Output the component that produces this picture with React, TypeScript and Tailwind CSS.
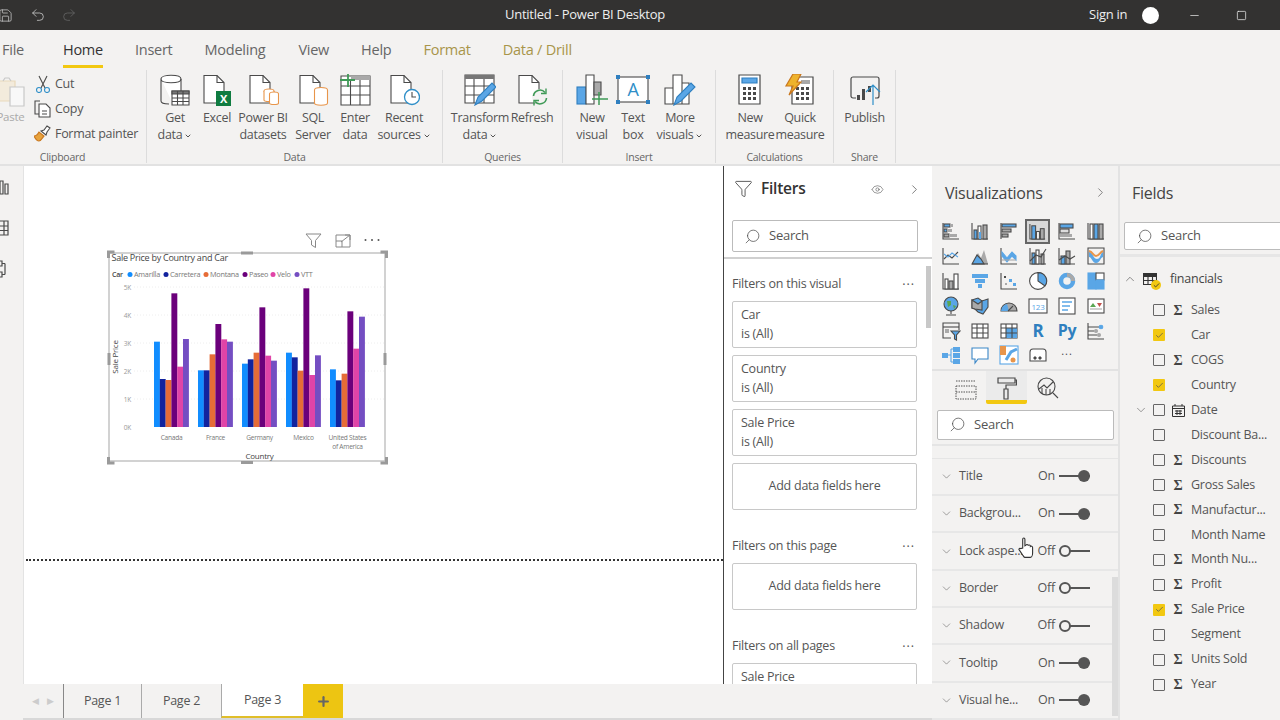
import type { ReactNode } from 'react'
import { ChevronRight, ChevronDown, ChevronUp, Search, Filter, Eye, Undo2, Redo2, Save, Minus, Square, Plus, Check } from 'lucide-react'

const B = '#5aa6e6'
const D = '#4a4a4a'
const G = '#a9a9a9'
const O = '#e8954a'

function Ico({ s = 20, vb = 20, children }: { s?: number; vb?: number; children: ReactNode }) {
  return (
    <svg width={s} height={s} viewBox={`0 0 ${vb} ${vb}`} fill="none" stroke={D} strokeWidth="1.1">
      {children}
    </svg>
  )
}

const R = ({ x, y, w, h, f = B, st = 'none' }: { x: number; y: number; w: number; h: number; f?: string; st?: string }) => (
  <rect x={x} y={y} width={w} height={h} fill={f} stroke={st} />
)
const Ax = () => <path d="M2 2v16h16" />

const vizIcons: ReactNode[] = [
  <><Ax /><R x={3} y={3} w={6} h={3} st={D} /><R x={9} y={3} w={3} h={3} f={G} /><R x={3} y={8} w={3} h={3} st={D} /><R x={6} y={8} w={5} h={3} f={G} /><R x={3} y={13} w={5} h={3} f={G} st={D} /><R x={8} y={13} w={8} h={3} f={G} /></>,
  <><Ax /><R x={4} y={9} w={3} h={9} st={D} /><R x={8} y={5} w={3} h={13} f="#fff" st={D} /><R x={9} y={11} w={2} h={7} /><R x={13} y={4} w={4} h={14} f={G} st={D} /></>,
  <><path d="M2 2v16" /><R x={3} y={3} w={14} h={3} st={D} /><R x={3} y={8} w={9} h={3} f={G} st={D} /><R x={3} y={13} w={6} h={3} f={G} st={D} /></>,
  <><Ax /><R x={4} y={4} w={4} h={14} st={D} /><R x={9} y={10} w={3} h={8} f="#fff" st={D} /><R x={13} y={7} w={4} h={11} f={G} st={D} /></>,
  <><Ax /><R x={3} y={3} w={13} h={4} st={D} /><R x={3} y={8} w={9} h={4} f="#ddd" st={D} /><R x={3} y={13} w={12} h={3} f={G} /></>,
  <><Ax /><R x={4} y={3} w={3} h={15} f="#fff" st={D} /><R x={8} y={3} w={4} h={15} st={D} /><R x={13} y={3} w={4} h={15} f={G} st={D} /></>,
  <><Ax /><path d="M3 13l4-4 4 3 6-6" stroke={D} /><path d="M3 8l4 3 4-4 6 4" stroke={B} /></>,
  <><path d="M2 18L8 7l3 5 3-8 4 14z" fill={G} stroke="none" /><path d="M2 18L7 9l4 4 3 5z" fill={B} /><path d="M2 18h16" /></>,
  <><Ax /><path d="M3 6l5 6 5-6 4 4v4l-4-4-5 6-5-6z" fill={B} stroke={B} /><path d="M3 14h14" stroke={G} /></>,
  <><Ax /><R x={4} y={7} w={3} h={11} st={D} /><R x={8} y={4} w={3} h={14} f="#fff" st={D} /><R x={13} y={8} w={3} h={10} f={G} st={D} /><path d="M2 15l6-6 5 2 5-8" stroke={D} /></>,
  <><Ax /><R x={4} y={10} w={4} h={8} st={D} /><R x={9} y={5} w={4} h={13} f={G} st={D} /><path d="M2 14l6-4 5 3 5-3" /></>,
  <><path d="M2 2h16v16H2z" /><path d="M3 6c4 0 4 7 8 7s3-6 6-7v5c-3 1-3 6-7 6s-4-6-7-6z" fill={B} stroke="none" /><path d="M3 5c4 1 4 5 7 5s4-4 7-5" stroke={O} strokeWidth="2" /></>,
  <><Ax /><R x={4} y={8} w={3} h={10} f="#fff" st={D} /><R x={8} y={10} w={4} h={8} f={G} st={D} /><R x={13} y={3} w={4} h={15} f="#fff" st={D} /></>,
  <><path d="M2 3h16v4H2z" fill={B} stroke="none" /><path d="M5 8h10v4H5z" fill={B} stroke="none" /><path d="M8 13h4v4H8z" fill={B} stroke="none" /></>,
  <><Ax /><R x={5} y={5} w={2} h={2} f={D} /><R x={10} y={8} w={3} h={3} /><R x={14} y={12} w={3} h={3} f={B} /><R x={6} y={12} w={2} h={2} f={G} /></>,
  <><circle cx="10" cy="10" r="8.4" fill="#fff" /><path d="M10 10V1.6A8.4 8.4 0 0 1 17 15z" fill={B} stroke={D} /></>,
  <><circle cx="10" cy="10" r="6" stroke={B} strokeWidth="4.5" /><path d="M10 2a8 8 0 0 1 8 8h-4a4 4 0 0 0-4-4z" fill={G} stroke="none" /></>,
  <><R x={2} y={2} w={8} h={16} st={B} /><R x={10} y={2} w={8} h={7} f="#fff" st={D} /><R x={10} y={9} w={8} h={9} st={B} /></>,
  <><circle cx="10" cy="8" r="7" fill={B} stroke={D} /><path d="M6 5h4v4l-3 2zM12 9l3 1-2 3z" fill="#5aa653" stroke="none" /><path d="M10 15v3M5 19h10" /></>,
  <><path d="M2 4l6-2 4 3 6-2v8l-5 7-5-2-3-3-3-1z" fill={B} stroke={D} /><path d="M2 4l6 4 4-3v9l-7-1-3-1z" fill={G} stroke={D} /></>,
  <><path d="M2 15a8 8 0 0 1 16 0z" fill={G} stroke={D} /><path d="M2 15a8 8 0 0 1 6-7l2 7z" fill={B} stroke="none" /><path d="M9 15l5-5" stroke={D} /></>,
  <><R x={1} y={3} w={18} h={14} f="#fff" st={D} /><text x="10" y="13.5" textAnchor="middle" fontSize="8" fill={B} stroke="none">123</text></>,
  <><R x={2} y={2} w={16} h={16} f="#fff" st={D} /><path d="M5 6h10M5 10h8M5 14h6" stroke={B} strokeWidth="1.5" /></>,
  <><R x={2} y={3} w={16} h={14} f="#fff" st={D} /><path d="M4 11l3-4 3 4z" fill="#5aa653" stroke="none" /><path d="M11 7h5l-2.500 4z" fill="#c4514d" stroke="none" /><path d="M4 13h12" stroke={G} /></>,
  <><path d="M10 17H2V2h16v7" /><path d="M2 6h16" /><R x={4} y={8} w={4} h={4} f={G} /><path d="M10 10h9l-3.500 4v5l-2-1v-4z" fill={B} stroke={D} /></>,
  <><R x={2} y={3} w={16} h={14} f="#fff" st={D} /><path d="M2 7h16M2 12h16M7 3v14M13 3v14" /></>,
  <><R x={2} y={3} w={16} h={14} f="#fff" st={D} /><R x={7} y={7} w={11} h={10} st="none" /><path d="M2 7h16M2 12h16M7 3v14M13 3v14" /></>,
  <text x="10" y="16" textAnchor="middle" fontSize="17" fontWeight="700" fill="#2f7fbf" stroke="none" fontFamily="Open Sans">R</text>,
  <text x="10" y="15" textAnchor="middle" fontSize="16" fontWeight="700" fill="#2f7fbf" stroke="none" fontFamily="Open Sans">Py</text>,
  <><path d="M2 2v16h16" /><path d="M2 6h11M2 10h6M2 14h9" /><circle cx="15" cy="6" r="1.800" fill={B} stroke={B} /><circle cx="10" cy="10" r="1.500" fill={G} stroke={G} /><circle cx="13" cy="14" r="1.500" fill={G} stroke={G} /></>,
  <><R x={1} y={8} w={6} h={5} st="none" /><R x={12} y={2} w={7} h={5} st="none" /><R x={12} y={8} w={7} h={5} st="none" /><R x={12} y={14} w={7} h={5} st="none" /><path d="M7 10h3M10 4v13M10 4h2M10 17h2" stroke={B} /></>,
  <><path d="M2 3h16v11H8l-3 4v-4H2z" fill="#fff" stroke="#3b87c7" /></>,
  <><R x={1} y={1} w={18} h={18} f="#fff" st={B} /><R x={1} y={1} w={6} h={9} f={O} /><path d="M7 15l5-8 6-3" stroke={B} strokeWidth="3" /><circle cx="14" cy="15" r="2.500" fill={O} stroke="none" /></>,
  <><path d="M2 7a3 3 0 0 1 3-3h10a3 3 0 0 1 3 3v9H2z" fill="#fff" /><path d="M5 13l2-2 2 2-2 2zM10 13l2-2 2 2-2 2z" fill={D} stroke="none" /></>,
  <text x="10" y="10" textAnchor="middle" fontSize="11" fill={D} stroke="none" letterSpacing="1">...</text>,
]

const PageIcon = ({ children }: { children?: ReactNode }) => (
  <svg width="32" height="32" viewBox="0 0 32 32" fill="none" stroke={D} strokeWidth="1.1">
    <path d="M3 1.500h13l7 7V29H3z" fill="#fff" />
    <path d="M16 1.500v7h7" />
    {children}
  </svg>
)

const ribbonIcons: Record<string, ReactNode> = {
  get: (
    <svg width="32" height="32" viewBox="0 0 32 32" fill="none" stroke={D} strokeWidth="1.1">
      <path d="M2 5c0-5 20-5 20 0v22c0 2-4 3-8 3" fill="#fff" />
      <path d="M2 5c0 5 20 5 20 0M2 5v22c0 2 4 3 8 3" />
      <path d="M13 17h17v14H13z" fill="#fff" />
      <path d="M13 17h17v3H13z" fill="#777" />
      <path d="M13 24h17M13 27.500h17M18.500 17v14M24 17v14" />
    </svg>
  ),
  excel: (
    <PageIcon>
      <rect x="15" y="17" width="15" height="15" fill="#107c41" stroke="none" />
      <text x="22.500" y="29" textAnchor="middle" fontSize="11" fontWeight="700" fill="#fff" stroke="none" fontFamily="Open Sans">X</text>
    </PageIcon>
  ),
  pbi: (
    <PageIcon>
      <ellipse cx="22" cy="17" rx="5" ry="2" fill="#fff" stroke={O} />
      <path d="M17 17v9c0 2 10 2 10 0v-9" fill="#fff" stroke={O} />
      <ellipse cx="27" cy="20" rx="4.500" ry="2" fill="#fff" stroke={O} />
      <path d="M22.500 20v9c0 2 9 2 9 0v-9" fill="#fff" stroke={O} />
    </PageIcon>
  ),
  sql: (
    <PageIcon>
      <ellipse cx="24" cy="16" rx="6.500" ry="2.500" fill="#fff" stroke={O} />
      <path d="M17.500 16v13c0 3 13 3 13 0V16" fill="#fff" stroke={O} />
    </PageIcon>
  ),
  enter: (
    <svg width="32" height="32" viewBox="0 0 32 32" fill="none" stroke={D} strokeWidth="1.1">
      <path d="M2 2h29v29H2z" fill="#fff" />
      <path d="M12 2h19v4H12z" fill={G} stroke="none" />
      <path d="M2 12h29M2 21h29M11.500 6v25M21 6v25" />
      <path d="M9 0v13M1 6h15" stroke="#3f9a57" strokeWidth="1.800" />
    </svg>
  ),
  recent: (
    <PageIcon>
      <circle cx="24" cy="23" r="7.500" fill="#fff" stroke="#2f8fc8" strokeWidth="1.300" />
      <path d="M24 18v5h4" stroke={D} />
    </PageIcon>
  ),
  transform: (
    <svg width="32" height="32" viewBox="0 0 32 32" fill="none" stroke={D} strokeWidth="1.1">
      <path d="M1 1h29v28H1z" fill="#fff" />
      <path d="M1 1h29v4H1z" fill="#777" stroke="none" />
      <path d="M1 12h29M1 21h29M10 5v24M20 5v24" />
      <path d="M11 31l3-8 14-14 4 4-14 14z" fill={B} stroke="#2f7fbf" />
    </svg>
  ),
  refresh: (
    <PageIcon>
      <circle cx="24" cy="23" r="8" fill="#f3f2f1" stroke="none" />
      <path d="M17.500 22a6.500 6.500 0 0 1 11.500-3.500M30.500 24a6.500 6.500 0 0 1-11.500 3.500" stroke="#3f9a57" strokeWidth="1.600" />
      <path d="M30 14.500v5h-5M18 31.500v-5h5" stroke="#3f9a57" strokeWidth="1.400" />
    </PageIcon>
  ),
  newVisual: (
    <svg width="32" height="32" viewBox="0 0 32 32" fill="none" stroke={D} strokeWidth="1.1">
      <rect x="1" y="13" width="9" height="17" fill={B} stroke="#2f7fbf" />
      <path d="M10 30V1h8v29z" fill="#fff" />
      <path d="M18 8h7v13h-7z" fill={G} />
      <path d="M23 18v13M16 25h16" stroke="#3f9a57" strokeWidth="1.500" />
    </svg>
  ),
  textBox: (
    <svg width="34" height="32" viewBox="0 0 34 32" fill="none" stroke={D} strokeWidth="1.1">
      <rect x="2" y="3" width="30" height="25" fill="#fff" />
      <text x="17" y="22" textAnchor="middle" fontSize="18" fill="#2f8fc8" stroke="none" fontFamily="Open Sans">A</text>
      <path d="M0 1h4v4H0zM30 1h4v4h-4zM0 26h4v4H0zM30 26h4v4h-4z" fill="#2f7fbf" stroke="none" />
    </svg>
  ),
  moreVisuals: (
    <svg width="32" height="32" viewBox="0 0 32 32" fill="none" stroke={D} strokeWidth="1.1">
      <path d="M1 30V14h8v16zM9 30V1h9v29zM18 30V9h7v21z" fill="#fff" />
      <path d="M10 31l3-8 14-14 4 4-14 14z" fill={B} stroke="#2f7fbf" />
    </svg>
  ),
  measure: (
    <svg width="32" height="32" viewBox="0 0 32 32" fill="none" stroke={D} strokeWidth="1.2">
      <path d="M5 1h21v29H5z" fill="#fff" />
      <path d="M8 4h15v5H8z" fill={B} stroke="#2f7fbf" />
      <path d="M9 13h3v3H9zM14 13h3v3h-3zM19 13h3v3h-3zM9 18h3v3H9zM14 18h3v3h-3zM19 18h3v3h-3zM9 23h3v3H9zM14 23h3v3h-3zM19 23h3v3h-3z" fill={D} stroke="none" />
    </svg>
  ),
  quick: (
    <svg width="32" height="32" viewBox="0 0 32 32" fill="none" stroke={D} strokeWidth="1.2">
      <path d="M8 3h21v27H8z" fill="#fff" />
      <path d="M17 6h9v4h-9z" fill={G} stroke="none" />
      <path d="M12 13h3v3h-3zM17 13h3v3h-3zM22 13h3v3h-3zM12 18h3v3h-3zM17 18h3v3h-3zM22 18h3v3h-3zM12 23h3v3h-3zM17 23h3v3h-3zM22 23h3v3h-3z" fill={D} stroke="none" />
      <path d="M9 0h8l-4 8h4L5 21l4-9H2z" fill="#eeb32d" stroke="#c9771e" />
    </svg>
  ),
  publish: (
    <svg width="32" height="32" viewBox="0 0 32 32" fill="none" stroke={D} strokeWidth="1.2">
      <path d="M7 24H4a2 2 0 0 1-2-2V5a2 2 0 0 1 2-2h24a2 2 0 0 1 2 2v17a2 2 0 0 1-2 2h-2" />
      <path d="M8 21h3v5H8zM13 15h3v11h-3zM19 12h3v6h-3z" fill={D} stroke="none" />
      <path d="M24 31V11M17 18l7-7 7 7" stroke="#2f8fc8" />
    </svg>
  ),
}

function RibbonBtn({ w, icon, lines, caret }: { w: number; icon: string; lines: string[]; caret?: boolean }) {
  return (
    <div className="flex flex-col items-center pt-[3px] text-[12.500px] tracking-[-0.3px] leading-[17px] text-[#555]" style={{ width: w }}>
      <div className="h-[34px] mb-[2px] flex items-center">{ribbonIcons[icon]}</div>
      {lines.map((l, i) => (
        <div key={l} className="whitespace-nowrap flex items-center">
          {l}
          {caret && i === lines.length - 1 && <ChevronDown size={8} strokeWidth={3} className="ml-[2px] mt-[2px]" />}
        </div>
      ))}
    </div>
  )
}

function Group({ w, label, pl = 0, children }: { w: number; label: string; pl?: number; children: ReactNode }) {
  return (
    <div className="h-full flex flex-col border-r border-[#dcdcdc] shrink-0" style={{ width: w }}>
      <div className="flex flex-1 min-h-0" style={{ paddingLeft: pl }}>{children}</div>
      <div className="h-[13px] text-center text-[10.500px] leading-[14px] text-[#666]">{label}</div>
    </div>
  )
}

function ClipRow({ icon, children }: { icon: ReactNode; children: ReactNode }) {
  return (
    <div className="flex items-center">
      <div className="w-[21px] shrink-0 flex">{icon}</div>
      {children}
    </div>
  )
}

function ClipboardGroup() {
  return (
    <div className="h-full w-[147px] shrink-0 flex flex-col border-r border-[#dcdcdc] overflow-hidden">
      <div className="flex flex-1 min-h-0">
        <div className="w-[31px] -ml-[5px] pt-[6px] flex flex-col items-center text-[11.500px] text-[#aaa] shrink-0">
          <svg width="30" height="31" viewBox="0 0 30 31" fill="none" stroke="#c8c8c8" strokeWidth="1.2">
            <path d="M3 5h16v20H3z" stroke="#ead9bb" fill="#f3ebdc" />
            <path d="M7 5l2-3h4l2 3" stroke="#c8c8c8" />
            <path d="M14 11h14v19H14z" fill="#f8f8f8" />
          </svg>
          <div className="mt-[1px]">Paste</div>
        </div>
        <div className="pl-[8px] pt-[1px] text-[12.500px] tracking-[-0.3px] leading-[25px] text-[#555] whitespace-nowrap">
          <ClipRow
            icon={
              <svg width="16" height="18" viewBox="0 0 16 18" fill="none" stroke={D} strokeWidth="1.1" className="ml-[1px]">
                <path d="M4 1l6 12M12 1L6 13" />
                <circle cx="4" cy="15" r="2.500" stroke="#2f8fc8" />
                <circle cx="12" cy="15" r="2.500" stroke="#2f8fc8" />
              </svg>
            }
          >
            Cut
          </ClipRow>
          <ClipRow
            icon={
              <svg width="17" height="18" viewBox="0 0 17 18" fill="none" stroke={D} strokeWidth="1.1">
                <path d="M6 1H1v13h4" />
                <path d="M5 4h7l4 4v9H5z" fill="#fff" />
                <path d="M8 11h5M8 14h5" />
              </svg>
            }
          >
            Copy
          </ClipRow>
          <ClipRow
            icon={
              <svg width="17" height="17" viewBox="0 0 17 17" fill="none" stroke={D} strokeWidth="1.1">
                <path d="M0 11c3 0 4-2 5-4l5 4c-2 2-3 5-5 5-2 0-4-3-5-5z" fill="#e8a33d" stroke="#c9771e" />
                <path d="M7 6l3-1 3-4 3 2-3 4-1 3z" fill="#fff" />
              </svg>
            }
          >
            Format painter
          </ClipRow>
        </div>
      </div>
      <div className="h-[13px] text-center text-[10.500px] leading-[14px] text-[#666] -ml-[21px]">Clipboard</div>
    </div>
  )
}

const bars = [
  { x: 154, tops: [350, 462, 465, 205, 425, 342] },
  { x: 198, tops: [436, 436, 388, 297, 343, 350] },
  { x: 242, tops: [416, 403, 383, 247, 392, 407] },
  { x: 286, tops: [383, 397, 437, 190, 450, 391] },
  { x: 330, tops: [433, 466, 446, 259, 371, 275] },
]
const series = ['#118dff', '#12239e', '#e66c37', '#6b007b', '#e044a7', '#744ec2']
const legend: [string, number, number][] = [
  ['Amarilla', 130, 0],
  ['Carretera', 166, 1],
  ['Montana', 206, 2],
  ['Paseo', 245, 3],
  ['Velo', 273, 4],
  ['VTT', 297, 5],
]

function Chart() {
  const grip = '#9a9a9a'
  return (
    <svg width="300" height="245" viewBox="100 225 300 245" className="absolute left-[76px] top-[59px]" fontFamily="Open Sans">
      <rect x="109" y="253" width="276" height="208" fill="#fff" stroke="#b5b5b5" strokeWidth="1.2" />
      <text x="111.500" y="261" fontSize="9" fill="#444">Sale Price by Country and Car</text>
      <text x="112" y="277" fontSize="7" fontWeight="600" fill="#444">Car</text>
      {legend.map(([n, x, i]) => (
        <g key={n}>
          <circle cx={x} cy={274.500} r="2.500" fill={series[i]} />
          <text x={x + 4} y={277} fontSize="7.300" fill="#777">{n}</text>
        </g>
      ))}
      {[0, 1, 2, 3, 4, 5].map((k) => (
        <g key={k}>
          <text x={131} y={429.500 - k * 28} textAnchor="end" fontSize="6.500" fill="#999">{k}K</text>
          {k > 0 && <line x1="134" x2="384" y1={427 - k * 28} y2={427 - k * 28} stroke="#eee" strokeDasharray="1 2" />}
        </g>
      ))}
      <text transform="translate(118 357) rotate(-90)" fontSize="8" fill="#444" textAnchor="middle">Sale Price</text>
      {bars.map((g) =>
        g.tops.map((t, i) => {
          const y = t / 3 + 225
          return <rect key={i} x={g.x + i * 5.8} y={y} width={5.9} height={427 - y} fill={series[i]} />
        }),
      )}
      {[['Canada', 171.500], ['France', 215.500], ['Germany', 259.500], ['Mexico', 303.500]].map(([n, x]) => (
        <text key={n} x={x} y="440" textAnchor="middle" fontSize="6.600" fill="#777">{n}</text>
      ))}
      <text x="347.500" y="440" textAnchor="middle" fontSize="6.600" fill="#777">United States</text>
      <text x="347.500" y="449" textAnchor="middle" fontSize="6.600" fill="#777">of America</text>
      <text x="259.500" y="459" textAnchor="middle" fontSize="8" fill="#444">Country</text>
      <path d="M108.500 258v-6h6M380.500 252h6v6M108.500 457v6h6M380.500 463h6v-6" fill="none" stroke={grip} strokeWidth="3" />
      <path d="M241 253h12M241 462.500h12M109 353v12M385 353v12" fill="none" stroke={grip} strokeWidth="3" />
      <path d="M306 234h15l-5.500 6.500v7l-4-2.500v-4.500z" fill="none" stroke="#888" strokeWidth="1" />
      <path d="M336 235h14v12h-14zM341 242l9-7M345 235h5v5M336 241h6v6" fill="none" stroke="#888" strokeWidth="1" />
      <circle cx="365.500" cy="240" r="1" fill="#555" />
      <circle cx="372" cy="240" r="1" fill="#555" />
      <circle cx="378.500" cy="240" r="1" fill="#555" />
    </svg>
  )
}

function FilterCard({ a, b }: { a: string; b: string }) {
  return (
    <div className="h-[47px] mb-[7px] border border-[#c8c8c8] rounded-[2px] bg-white pl-[8px] pt-[4px] text-[12.500px] leading-[18.500px] text-[#555]">
      <div>{a}</div>
      <div>{b}</div>
    </div>
  )
}

function AddFields() {
  return (
    <div className="h-[47px] border border-[#c8c8c8] rounded-[2px] flex items-center justify-center text-[12.500px] text-[#555]">
      Add data fields here
    </div>
  )
}

function SectionHead({ children }: { children: ReactNode }) {
  return (
    <div className="flex items-center justify-between h-[18px] text-[12.500px] text-[#555]">
      <span>{children}</span>
      <span className="tracking-[1px] pr-[2px] -mt-[6px]">...</span>
    </div>
  )
}

function SearchBox({ cls }: { cls: string }) {
  return (
    <div className={`flex items-center gap-[8px] pl-[11px] bg-white border border-[#bbb] rounded-[2px] text-[13px] text-[#555] ${cls}`}>
      <Search size={17} strokeWidth={1} className="-scale-x-100 text-[#444]" />
      Search
    </div>
  )
}

const formatRows: [string, boolean][] = [
  ['Title', true],
  ['Backgrou...', true],
  ['Lock aspe...', false],
  ['Border', false],
  ['Shadow', false],
  ['Tooltip', true],
  ['Visual he...', true],
]

function Toggle({ on }: { on: boolean }) {
  return (
    <div className="w-[31px] h-[12px] relative flex items-center">
      <div className="h-[2px] w-full bg-[#555]" />
      {on ? (
        <div className="absolute right-0 top-0 w-[12px] h-[12px] rounded-full bg-[#555]" />
      ) : (
        <div className="absolute left-0 top-0 w-[12px] h-[12px] rounded-full bg-[#f3f2f1] border-2 border-[#555]" />
      )}
    </div>
  )
}

const fields: { n: string; t?: 's' | 'd'; on?: boolean; chev?: boolean }[] = [
  { n: 'Sales', t: 's' },
  { n: 'Car', on: true },
  { n: 'COGS', t: 's' },
  { n: 'Country', on: true },
  { n: 'Date', t: 'd', chev: true },
  { n: 'Discount Ba...' },
  { n: 'Discounts', t: 's' },
  { n: 'Gross Sales', t: 's' },
  { n: 'Manufactur...', t: 's' },
  { n: 'Month Name' },
  { n: 'Month Nu...', t: 's' },
  { n: 'Profit', t: 's' },
  { n: 'Sale Price', t: 's', on: true },
  { n: 'Segment' },
  { n: 'Units Sold', t: 's' },
  { n: 'Year', t: 's' },
]

function RailIcon({ kind }: { kind: number }) {
  return (
    <svg width="16" height="20" viewBox="0 0 16 20" fill="none" stroke={D} strokeWidth="1.200">
      {kind === 0 && <path d="M1 17V9h3v8zM6 17V4h3v13zM11 17V7h3v10z" />}
      {kind === 1 && <path d="M0 3h14v14H0zM0 8h14M0 12.500h14M5 3v14M10 3v14" />}
      {kind === 2 && <path d="M0 2h8v5H0zM0 13h8v5H0zM8 4.500h3M8 15.500h3M11 4.500v11M3 7v6" />}
    </svg>
  )
}

export default function App() {
  return (
    <div className="w-[1280px] h-[720px] overflow-hidden flex flex-col bg-[#f3f2f1] font-['Open_Sans','Liberation_Sans',sans-serif] tracking-[-0.25px]">
      {/* title bar */}
      <div className="h-[30px] shrink-0 bg-[#333231] flex items-center text-white text-[13px] relative">
        <Save size={15} strokeWidth={1.2} className="text-[#ccc] -ml-[2px]" />
        <Undo2 size={16} strokeWidth={1.2} className="text-[#ccc] ml-[17px]" />
        <Redo2 size={16} strokeWidth={1.2} className="text-[#666] ml-[15px]" />
        <div className="ml-[428px] text-[#eee]">Untitled - Power BI Desktop</div>
        <div className="ml-[424px] text-[#eee]">Sign in</div>
        <div className="ml-[15px] w-[17px] h-[17px] rounded-full bg-white" />
        <Minus size={13} strokeWidth={1.3} className="ml-[29px] text-[#eee]" />
        <Square size={11} strokeWidth={1.6} className="ml-[35px] text-[#eee]" />
      </div>

      {/* tabs */}
      <div className="h-[40px] shrink-0 flex items-center text-[14.500px] text-[#666] pl-[2px]">
        <div>File</div>
        <div className="ml-[39px] relative text-[#333] font-medium">
          Home
          <div className="absolute left-0 right-0 -bottom-[7px] h-[3px] bg-[#f2c811]" />
        </div>
        <div className="ml-[32px]">Insert</div>
        <div className="ml-[32px]">Modeling</div>
        <div className="ml-[33px]">View</div>
        <div className="ml-[32px]">Help</div>
        <div className="ml-[32px] text-[#a8954a]">Format</div>
        <div className="ml-[32px] text-[#a8954a]">Data / Drill</div>
      </div>

      {/* ribbon */}
      <div className="h-[96px] shrink-0 flex border-b-2 border-[#e2e2e2] pb-[1px]">
        <ClipboardGroup />
        <Group w={296} label="Data" pl={6}>
          <RibbonBtn w={44} icon="get" lines={['Get', 'data']} caret />
          <RibbonBtn w={40} icon="excel" lines={['Excel']} />
          <RibbonBtn w={52} icon="pbi" lines={['Power BI', 'datasets']} />
          <RibbonBtn w={48} icon="sql" lines={['SQL', 'Server']} />
          <RibbonBtn w={36} icon="enter" lines={['Enter', 'data']} />
          <RibbonBtn w={62} icon="recent" lines={['Recent', 'sources']} caret />
        </Group>
        <Group w={120} label="Queries" pl={4}>
          <RibbonBtn w={66} icon="transform" lines={['Transform', 'data']} caret />
          <RibbonBtn w={38} icon="refresh" lines={['Refresh']} />
        </Group>
        <Group w={153} label="Insert" pl={9}>
          <RibbonBtn w={40} icon="newVisual" lines={['New', 'visual']} />
          <RibbonBtn w={42} icon="textBox" lines={['Text', 'box']} />
          <RibbonBtn w={52} icon="moreVisuals" lines={['More', 'visuals']} caret />
        </Group>
        <Group w={118} label="Calculations" pl={9}>
          <RibbonBtn w={50} icon="measure" lines={['New', 'measure']} />
          <RibbonBtn w={50} icon="quick" lines={['Quick', 'measure']} />
        </Group>
        <Group w={62} label="Share">
          <RibbonBtn w={61} icon="publish" lines={['Publish']} />
        </Group>
      </div>

      <div className="flex-1 flex min-h-0">
        {/* left rail + canvas + filters + page tabs */}
        <div className="w-[932px] shrink-0 flex flex-col">
          <div className="flex-1 flex min-h-0">
            <div className="w-[23px] shrink-0 flex flex-col items-start pt-[11px] gap-[21px] border-r border-[#e3e3e3] -ml-[6px] box-content pl-[6px]">
              <div className="-ml-[6px]"><RailIcon kind={0} /></div>
              <div className="-ml-[6px]"><RailIcon kind={1} /></div>
              <div className="-ml-[6px]"><RailIcon kind={2} /></div>
            </div>
            <div className="w-[700px] shrink-0 bg-white relative border-r border-[#444]">
              <Chart />
              <div className="absolute left-[2px] right-0 top-[393px] border-t-2 border-dotted border-[#333]" />
            </div>
            <div className="flex-1 bg-white relative px-[8px] overflow-hidden min-w-0">
              <div className="h-[55px] flex items-start pt-[13px] text-[#333] pl-[2px]">
                <Filter size={19} strokeWidth={1} className="text-[#333]" />
                <span className="ml-[8px] text-[15.500px] leading-[19px] font-semibold">Filters</span>
                <Eye size={13} strokeWidth={1} className="ml-auto mr-[23px] mt-[4px] text-[#444]" />
                <ChevronRight size={15} strokeWidth={1} className="mr-[2px] mt-[3px]" />
              </div>
              <SearchBox cls="h-[32px] -mt-[1px] w-[186px]" />
              <div className="h-[2px] bg-[#d0d0d0] -mx-[8px] mt-[5px]" />
              <div className="w-[185px] mt-[16px]">
                <SectionHead>Filters on this visual</SectionHead>
                <div className="mt-[8px]">
                  <FilterCard a="Car" b="is (All)" />
                  <FilterCard a="Country" b="is (All)" />
                  <FilterCard a="Sale Price" b="is (All)" />
                  <AddFields />
                </div>
                <div className="mt-[27px]"><SectionHead>Filters on this page</SectionHead></div>
                <div className="mt-[8px]"><AddFields /></div>
                <div className="mt-[27px]"><SectionHead>Filters on all pages</SectionHead></div>
                <div className="mt-[8px]"><FilterCard a="Sale Price" b="is (All)" /></div>
              </div>
              <div className="absolute right-[1px] top-[100px] w-[5px] h-[62px] bg-[#c8c8c8]" />
            </div>
          </div>
          {/* page tabs */}
          <div className="h-[36px] shrink-0 flex border-b-2 border-[#d8d8d8] text-[12.500px] text-[#555] bg-[#f3f2f1] ml-[23px]">
            <div className="w-[40px] shrink-0 flex items-center justify-around px-[5px] text-[#ccc] text-[9px]">
              <span>◀</span><span>▶</span>
            </div>
            <div className="w-[78px] border-l border-[#888] flex items-center justify-center">Page 1</div>
            <div className="w-[80px] border-l border-[#aaa] flex items-center justify-center">Page 2</div>
            <div className="w-[82px] border-l border-[#aaa] flex items-center justify-center bg-white border-b-2 border-b-[#e0be2a]">Page 3</div>
            <div className="w-[40px] bg-[#edc512] flex items-center justify-center text-[#666]">
              <Plus size={15} strokeWidth={3.5} />
            </div>
          </div>
        </div>

        {/* visualizations */}
        <div className="w-[188px] shrink-0 border-r-2 border-[#e3e3e3] flex flex-col relative overflow-hidden">
          <div className="h-[53px] flex items-center justify-between pl-[13px] pr-[10px] text-[16px] font-medium text-[#444] shrink-0">
            Visualizations
            <ChevronRight size={15} strokeWidth={1} />
          </div>
          <div className="grid grid-cols-[repeat(6,29px)] auto-rows-[24.800px] pl-[4px] shrink-0 justify-items-center items-center">
            {vizIcons.map((ic, i) => (
              <div key={i} className={i === 3 ? 'bg-[#d8d8d8] outline-2 outline-[#666] h-[21px] w-[21px] flex items-center justify-center' : 'flex items-center justify-center'}>
                <Ico s={i === 3 ? 19 : 20}>{ic}</Ico>
              </div>
            ))}
          </div>
          <div className="h-[2px] bg-[#e2e2e2] mt-[1px] shrink-0" />
          <div className="h-[31px] flex shrink-0 pl-[13px] items-start">
            <div className="w-[41px] pt-[9px] flex justify-center">
              <svg width="22" height="20" viewBox="0 0 22 20" fill="none" stroke="#555" strokeDasharray="1.500 1">
                <path d="M1 1h20M1 6h20v13H1zM1 12h20" />
              </svg>
            </div>
            <div className="w-[41px] h-[33px] pt-[6px] flex justify-center bg-[#ebebeb] border-b-[4px] border-[#f2c811] rounded-b-[2px]">
              <svg width="20" height="23" viewBox="0 0 20 23" fill="none" stroke={D} strokeWidth="1.200">
                <path d="M1 1h17v5H1zM18 3h1.500v5H9v4" />
                <path d="M7 12h4v10H7z" />
              </svg>
            </div>
            <div className="w-[41px] pt-[6px] flex justify-center">
              <svg width="22" height="22" viewBox="0 0 22 22" fill="none" stroke={D} strokeWidth="1.100">
                <circle cx="9.500" cy="9.500" r="8.500" />
                <path d="M16 16l5 5M2 12l5-4 3 3 6-6M5 17V11M9 18v-6M13 17v-5" />
              </svg>
            </div>
          </div>
          <div className="px-[5px] mt-[8px] shrink-0"><SearchBox cls="h-[30px] w-[177px]" /></div>
          <div className="h-[2px] bg-[#e5e5e5] mt-[4px] shrink-0" />
          <div className="mt-[12px] shrink-0">
            <div className="h-[1px] bg-[#e5e5e5]" />
            {formatRows.map(([n, on]) => (
              <div key={n} className="h-[37.300px] flex items-center border-b-2 border-[#e7e7e7] text-[12.500px] text-[#555] pl-[8px]">
                <ChevronDown size={13} strokeWidth={1} />
                <span className="ml-[6px] w-[75px] whitespace-nowrap">{n}</span>
                <span className="w-[21px] text-right">{on ? 'On' : 'Off'}</span>
                <div className="ml-[4px]"><Toggle on={on} /></div>
              </div>
            ))}
          </div>
          <div className="absolute right-0 bottom-[4px] w-[6px] h-[139px] bg-[#dcdcdc]" />
          {/* mouse cursor */}
          <svg width="16" height="22" viewBox="0 0 14 20" className="absolute left-[86px] top-[371px]" fill="#fff" stroke="#333" strokeWidth="1">
            <path d="M4 10V2c0-1.500 2-1.500 2 0v6l1-.5c0-1 2-1 2 .5 0-1 2-1 2 .5.500-.5 2 0 2 1v5c0 2-1 4-2 4H6c-1 0-1-1-2-2L1 12c-1-1 0-2 1-1.500z" />
          </svg>
        </div>

        {/* fields */}
        <div className="flex-1 min-w-0 overflow-hidden flex flex-col">
          <div className="h-[53px] flex items-center pl-[12px] text-[16px] font-medium text-[#444] shrink-0">Fields</div>
          <div className="pl-[4px] mt-[3px] shrink-0"><SearchBox cls="h-[28px] w-[170px]" /></div>
          <div className="h-[3px] bg-[#e6e6e6] mt-[4px] shrink-0" />
          <div className="flex items-center h-[20px] mt-[12px] pl-[3px] text-[12.500px] text-[#444] font-medium shrink-0">
            <ChevronUp size={14} strokeWidth={1} />
            <div className="relative ml-[6px]">
              <svg width="14" height="12" viewBox="0 0 14 12" fill="none" stroke="#333" strokeWidth="1.100">
                <path d="M.5.5h13v11H.5z" />
                <path d="M.5.5h13v3H.5z" fill="#333" />
                <path d="M.5 7.500h13M5 3.500v8M9.500 3.500v8" />
              </svg>
              <div className="absolute -right-[4px] -bottom-[5px] w-[10px] h-[10px] rounded-full bg-[#f2c811] flex items-center justify-center">
                <Check size={7} strokeWidth={3} className="text-[#333]" />
              </div>
            </div>
            <span className="ml-[13px]">financials</span>
          </div>
          <div className="mt-[9px] shrink-0">
            {fields.map((f) => (
              <div key={f.n} className="h-[24.950px] flex items-center text-[12.500px] text-[#555] whitespace-nowrap">
                <div className="w-[33px] flex justify-end pr-[5px] shrink-0">
                  {f.chev && <ChevronDown size={14} strokeWidth={1} />}
                </div>
                {f.on ? (
                  <div className="w-[12px] h-[12px] shrink-0 rounded-[1px] bg-[#f2c811] flex items-center justify-center">
                    <Check size={9} strokeWidth={2} className="text-[#555]" />
                  </div>
                ) : (
                  <div className="w-[12px] h-[12px] shrink-0 rounded-[1px] border border-[#666]" />
                )}
                <div className="w-[26px] shrink-0 flex justify-center text-[14px] font-bold text-[#444] font-['Liberation_Serif',serif]">
                  {f.t === 's' && 'Σ'}
                  {f.t === 'd' && (
                    <svg width="13" height="13" viewBox="0 0 13 13" fill="none" stroke="#333">
                      <path d="M.5 2h12v10.500H.5zM.5 4.500h12M3 0v2M10 0v2M3 7h7M3 9.500h7M5 6v5M8 6v5" />
                    </svg>
                  )}
                </div>
                {f.n}
              </div>
            ))}
          </div>
        </div>
      </div>
    </div>
  )
}
